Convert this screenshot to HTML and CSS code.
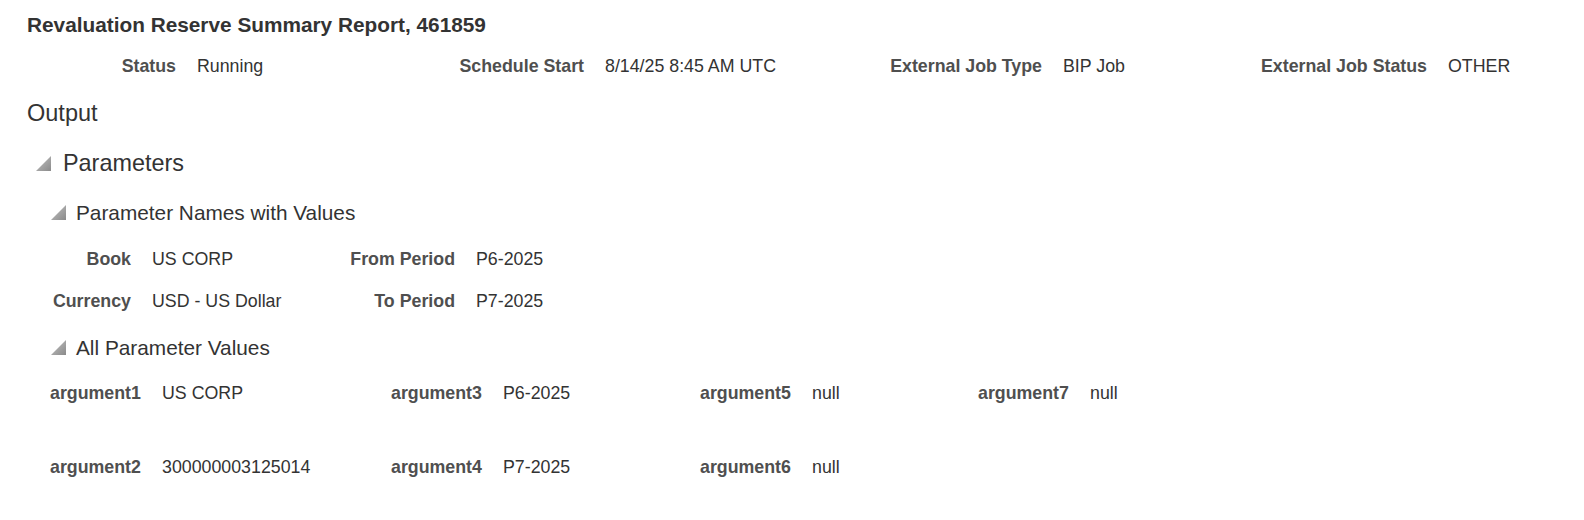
FILE: index.html
```html
<!DOCTYPE html>
<html lang="en">
<head>
<meta charset="utf-8">
<title>Revaluation Reserve Summary Report, 461859</title>
<link rel="stylesheet" href="styles.css">
</head>
<body>
<div class="page">
  <h1 class="title">Revaluation Reserve Summary Report, 461859</h1>

  <div class="summary">
    <span class="lbl r">Status</span><span class="val">Running</span>
    <span class="lbl r">Schedule Start</span><span class="val">8/14/25 8:45 AM UTC</span>
    <span class="lbl r">External Job Type</span><span class="val">BIP Job</span>
    <span class="lbl r">External Job Status</span><span class="val">OTHER</span>
  </div>

  <h2 class="output">Output</h2>

  <div class="sec1">
    <div class="disc big">
      <svg class="tri" width="15" height="15" viewBox="0 0 15 15"><defs><linearGradient id="g1" x1="0" y1="0" x2="1" y2="1"><stop offset="0" stop-color="#c4c4c4"/><stop offset="1" stop-color="#8a8a8a"/></linearGradient></defs><polygon points="15,0 15,15 0,15" fill="url(#g1)"/></svg>
      <span>Parameters</span>
    </div>

    <div class="sec2">
      <div class="disc mid">
        <svg class="tri" width="15" height="15" viewBox="0 0 15 15"><defs><linearGradient id="g2" x1="0" y1="0" x2="1" y2="1"><stop offset="0" stop-color="#c4c4c4"/><stop offset="1" stop-color="#8a8a8a"/></linearGradient></defs><polygon points="15,0 15,15 0,15" fill="url(#g2)"/></svg>
        <span>Parameter Names with Values</span>
      </div>

      <div class="pgrid">
        <span class="lbl r">Book</span><span class="val">US CORP</span>
        <span class="lbl r">From Period</span><span class="val">P6-2025</span>
        <span class="lbl r">Currency</span><span class="val">USD - US Dollar</span>
        <span class="lbl r">To Period</span><span class="val">P7-2025</span>
      </div>

      <div class="disc mid">
        <svg class="tri" width="15" height="15" viewBox="0 0 15 15"><defs><linearGradient id="g3" x1="0" y1="0" x2="1" y2="1"><stop offset="0" stop-color="#c4c4c4"/><stop offset="1" stop-color="#8a8a8a"/></linearGradient></defs><polygon points="15,0 15,15 0,15" fill="url(#g3)"/></svg>
        <span>All Parameter Values</span>
      </div>

      <div class="agrid">
        <span class="lbl">argument1</span><span class="val">US CORP</span>
        <span class="lbl">argument3</span><span class="val">P6-2025</span>
        <span class="lbl">argument5</span><span class="val">null</span>
        <span class="lbl">argument7</span><span class="val">null</span>
        <span class="lbl">argument2</span><span class="val">300000003125014</span>
        <span class="lbl">argument4</span><span class="val">P7-2025</span>
        <span class="lbl">argument6</span><span class="val">null</span>
        <span></span><span></span>
      </div>
    </div>
  </div>
</div>
</body>
</html>
```

FILE: styles.css
```css
html, body {
  margin: 0;
  padding: 0;
  background: #ffffff;
}

body {
  font-family: "Liberation Sans", Arial, sans-serif;
  color: #333333;
}

.page {
  padding: 13px 0 0 27px;
}

.title {
  margin: 0;
  font-size: 20.8px;
  line-height: 24px;
  font-weight: bold;
  color: #333333;
}

.lbl {
  font-size: 17.8px;
  line-height: 22px;
  font-weight: bold;
  color: #4f4f4f;
  white-space: nowrap;
}

.lbl.r {
  text-align: right;
}

.val {
  font-size: 17.8px;
  line-height: 22px;
  color: #333333;
  white-space: nowrap;
}

.summary {
  margin-top: 18px;
  display: grid;
  grid-template-columns: 149px 206px 160px 246px 170px 163px 180px auto;
  column-gap: 21px;
}

.output {
  margin: 22px 0 0 0;
  font-size: 23.5px;
  line-height: 28px;
  font-weight: normal;
  color: #333333;
}

.sec1 {
  margin-top: 22px;
}

.disc {
  display: flex;
  align-items: baseline;
  gap: 12px;
  color: #333333;
}

.disc .tri {
  flex: none;
}

.disc.big {
  padding-left: 9px;
  font-size: 23.4px;
  line-height: 28px;
}

.sec2 {
  margin-top: 23px;
  padding-left: 24px;
}

.disc.mid {
  font-size: 20.8px;
  line-height: 26px;
  gap: 10px;
}

.pgrid {
  margin: 22px 0 23px -1px;
  display: grid;
  grid-template-columns: 81px 160px 122px auto;
  column-gap: 21px;
  row-gap: 20px;
}

.agrid {
  margin: 21px 0 0 -1px;
  display: grid;
  grid-template-columns: 91px 208px 91px 176px 91px 145px 91px auto;
  column-gap: 21px;
  row-gap: 52px;
}
```
